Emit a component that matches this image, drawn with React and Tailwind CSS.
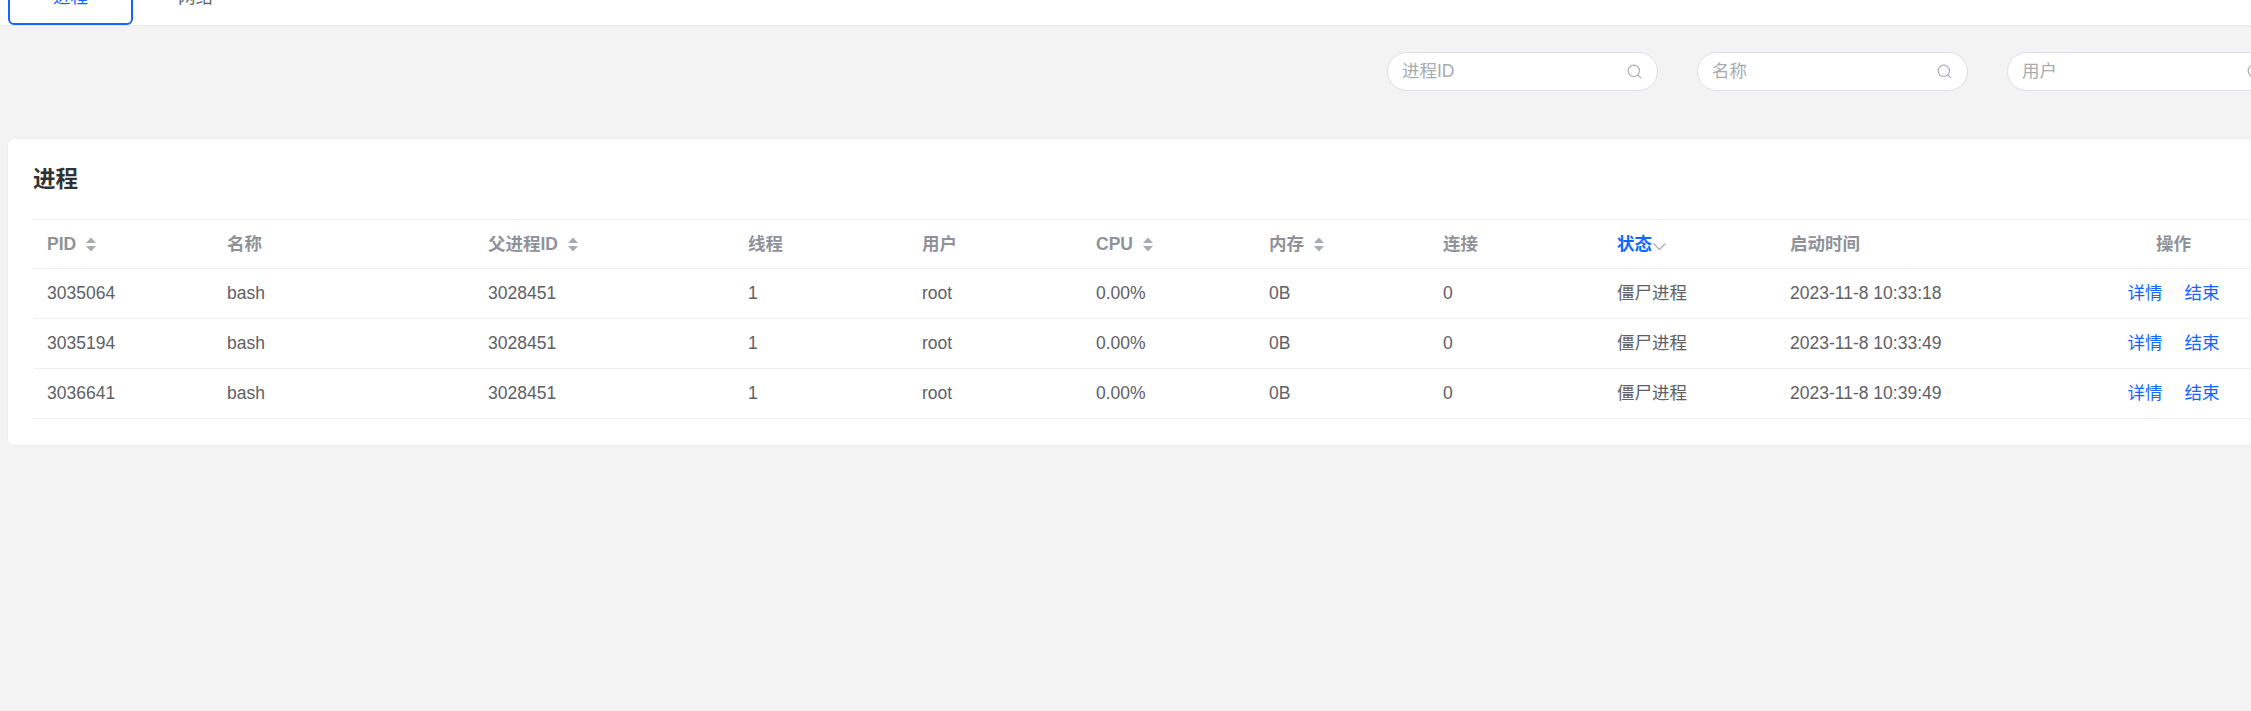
import React from "react";
import { Search } from "lucide-react";

const rows = [
  { pid: "3035064", name: "bash", ppid: "3028451", threads: "1", user: "root", cpu: "0.00%", mem: "0B", conn: "0", state: "僵尸进程", start: "2023-11-8 10:33:18" },
  { pid: "3035194", name: "bash", ppid: "3028451", threads: "1", user: "root", cpu: "0.00%", mem: "0B", conn: "0", state: "僵尸进程", start: "2023-11-8 10:33:49" },
  { pid: "3036641", name: "bash", ppid: "3028451", threads: "1", user: "root", cpu: "0.00%", mem: "0B", conn: "0", state: "僵尸进程", start: "2023-11-8 10:39:49" },
];

const cols = "grid grid-cols-[180px_261px_260px_174px_174px_173px_174px_174px_173px_318px_159px]";

const SortIcon = () => (
  <svg width="12" height="15" viewBox="0 0 12 15" className="ml-[9px] shrink-0">
    <path d="M6 0.5 L11 6 L1 6 Z" fill="#a8abb2" />
    <path d="M1 9 L11 9 L6 14.5 Z" fill="#a8abb2" />
  </svg>
);

const Chevron = () => (
  <svg width="15" height="9" viewBox="0 0 15 9" className="mt-[5px] shrink-0">
    <path d="M1.5 1.5 L7.5 7.5 L13.5 1.5" fill="none" stroke="#a8abb2" strokeWidth="1.2" />
  </svg>
);

const Head = ({ children, sort }) => (
  <div className="flex items-center pl-[14px] font-bold text-[#8f9298]">
    {children}
    {sort && <SortIcon />}
  </div>
);

const SearchBox = ({ placeholder }) => (
  <div className="flex items-center w-[271px] h-[39px] shrink-0 rounded-full bg-white border border-[#dcdfe6] pl-[14px] pr-[14px]">
    <span className="flex-1 text-[17.5px] text-[#a8abb2]">{placeholder}</span>
    <Search size={17} strokeWidth={1.6} color="#a8abb2" />
  </div>
);

export default function App() {
  return (
    <div
      className="w-screen h-screen overflow-hidden bg-[#f3f3f4]"
      style={{ fontFamily: '"Liberation Sans", "Noto Sans CJK SC", sans-serif' }}
    >
      <div className="w-[2286px]">
        <div className="h-[56px] -mt-[30px] bg-white border-b border-[#e6e8ec] flex items-start pl-[8px] text-[17.5px]">
          <div className="w-[125px] h-[55px] border-2 border-[#1366ff] rounded-md flex items-center justify-center text-[#1366ff]">
            进程
          </div>
          <div className="w-[125px] h-[55px] flex items-center justify-center text-[#606266]">
            网络
          </div>
        </div>

        <div className="flex justify-end gap-[39px] pr-[8px] pt-[26px] pb-[48px]">
          <SearchBox placeholder="进程ID" />
          <SearchBox placeholder="名称" />
          <SearchBox placeholder="用户" />
        </div>

        <div className="mx-[8px] bg-white rounded-md shadow-[0_0_2px_rgba(0,0,0,0.08)] px-[25px] pt-[26px] pb-[26px]">
          <h2 className="h-[30px] leading-[30px] text-[22.5px] font-bold text-[#303133] mb-[24px]">进程</h2>

          <div className="text-[17.5px] border-t border-[#ebeef5]">
            <div className={`${cols} h-[49px] border-b border-[#ebeef5]`}>
              <Head sort>PID</Head>
              <Head>名称</Head>
              <Head sort>父进程ID</Head>
              <Head>线程</Head>
              <Head>用户</Head>
              <Head sort>CPU</Head>
              <Head sort>内存</Head>
              <Head>连接</Head>
              <div className="flex items-center pl-[14px] font-bold text-[#1366ff]">
                状态
                <Chevron />
              </div>
              <Head>启动时间</Head>
              <div className="flex items-center justify-center font-bold text-[#8f9298]">操作</div>
            </div>

            {rows.map((r) => (
              <div key={r.pid} className={`${cols} h-[50px] border-b border-[#ebeef5] text-[#5e6066]`}>
                <div className="flex items-center pl-[14px]">{r.pid}</div>
                <div className="flex items-center pl-[14px]">{r.name}</div>
                <div className="flex items-center pl-[14px]">{r.ppid}</div>
                <div className="flex items-center pl-[14px]">{r.threads}</div>
                <div className="flex items-center pl-[14px]">{r.user}</div>
                <div className="flex items-center pl-[14px]">{r.cpu}</div>
                <div className="flex items-center pl-[14px]">{r.mem}</div>
                <div className="flex items-center pl-[14px]">{r.conn}</div>
                <div className="flex items-center pl-[14px]">{r.state}</div>
                <div className="flex items-center pl-[14px]">{r.start}</div>
                <div className="flex items-center justify-center gap-[22px] text-[#1366ff]">
                  <span>详情</span>
                  <span>结束</span>
                </div>
              </div>
            ))}
          </div>
        </div>
      </div>
    </div>
  );
}
